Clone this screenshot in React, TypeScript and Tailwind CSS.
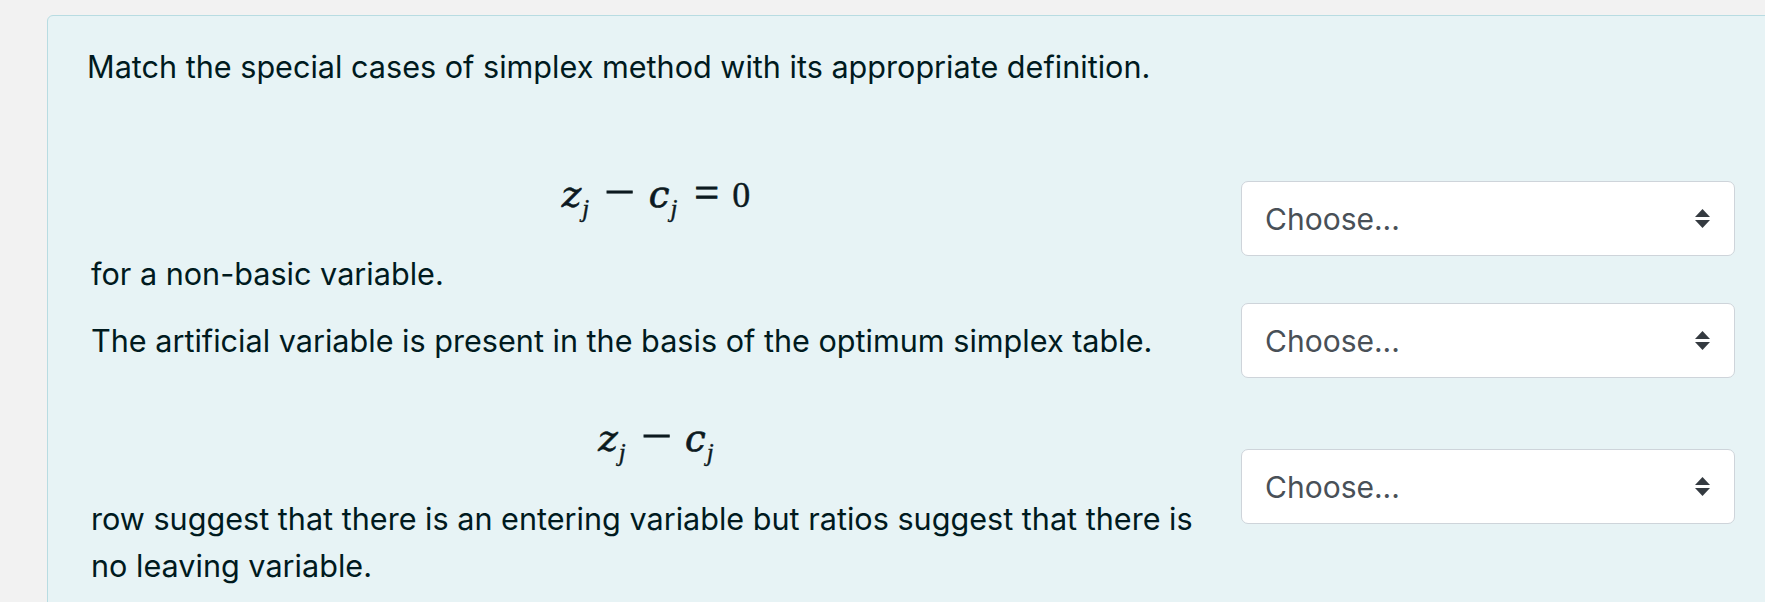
import React from "react";

const serif = { fontFamily: '"Liberation Serif", serif' };
const dejavu = { fontFamily: '"DejaVu Serif", serif' };

function Sub({ children }: { children: React.ReactNode }) {
  return (
    <sub className="ml-[1px] italic text-[25px] bottom-[-10px] [-webkit-text-stroke:0.4px]" style={serif}>
      {children}
    </sub>
  );
}

function Zc({ eq }: { eq?: boolean }) {
  return (
    <span className="whitespace-nowrap text-[#0c1a1f]">
      <span className="italic text-[37px] [-webkit-text-stroke:0.7px]" style={dejavu}>z</span>
      <Sub>j</Sub>
      <span className="ml-[18px] mr-[16px] inline-block scale-x-[1.2] text-[45px] [-webkit-text-stroke:0.9px]" style={serif}>−</span>
      <span className="italic text-[37px] [-webkit-text-stroke:0.7px]" style={dejavu}>c</span>
      <Sub>j</Sub>
      {eq && (
        <>
          <span className="ml-[17px] mr-[13px] text-[44px] [-webkit-text-stroke:0.8px]" style={serif}>=</span>
          <span className="text-[36px] [-webkit-text-stroke:0.4px]" style={serif}>0</span>
        </>
      )}
    </span>
  );
}

function MathBlock({ eq }: { eq?: boolean }) {
  return (
    <div className="h-[111px] pt-[30px] text-center leading-[45px]">
      <Zc eq={eq} />
    </div>
  );
}

function Choose() {
  return (
    <div className="ml-[16px] flex h-[75px] w-[494px] shrink-0 items-center justify-between rounded-[7px] border border-[#ced4da] bg-white pl-[23px] pr-[24px] text-[30px] text-[#495057]">
      <span>Choose...</span>
      <svg width="15" height="19" viewBox="0 0 15 19" className="fill-[#343a40]">
        <polygon points="0,8 7.5,0 15,8" />
        <polygon points="0,11 15,11 7.5,19" />
      </svg>
    </div>
  );
}

export default function App() {
  return (
    <div
      className="h-[602px] w-full overflow-hidden bg-[#f2f2f2] pl-[47px] pt-[15px]"
      style={{ fontFamily: 'Inter, "Noto Sans", sans-serif' }}
    >
      <div className="min-h-[700px] w-[1760px] rounded-tl-[6px] border border-[#b8dce2] bg-[#e7f3f5] pl-[39px] pt-[28px] text-[30.6px] leading-[46px] text-[#001a1e]">
        <p>Match the special cases of simplex method with its appropriate definition.</p>

        <div className="mt-[50px] flex flex-col gap-[6px]">
          <div className="flex items-center">
            <div className="w-[1138px] shrink-0">
              <MathBlock eq />
              <p className="pl-[4px]">for a non-basic variable.</p>
            </div>
            <Choose />
          </div>

          <div className="flex items-center">
            <div className="w-[1138px] shrink-0">
              <p className="pl-[4px]">The artificial variable is present in the basis of the optimum simplex table.</p>
            </div>
            <Choose />
          </div>

          <div className="flex items-center">
            <div className="w-[1138px] shrink-0">
              <MathBlock />
              <p className="pl-[4px] leading-[47px]">
                row suggest that there is an entering variable but ratios suggest that there is
                <br />
                no leaving variable.
              </p>
            </div>
            <Choose />
          </div>
        </div>
      </div>
    </div>
  );
}
